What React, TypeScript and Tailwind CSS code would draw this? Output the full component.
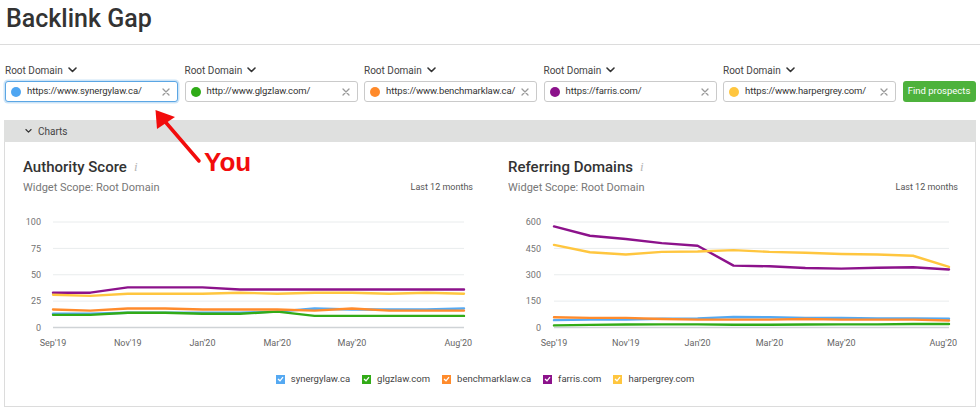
import React from 'react';

type Series = { color: string; values: number[] };

const C = {
  blue: '#55a9f2',
  green: '#32ab17',
  orange: '#ff8b2c',
  purple: '#8c128b',
  yellow: '#ffc63f',
};

const authority: Series[] = [
  { color: C.blue, values: [13, 13, 14, 14, 14, 14, 15, 18, 17, 17, 17, 18] },
  { color: C.green, values: [12, 12, 14, 14, 13, 13, 15, 11, 11, 11, 11, 11] },
  { color: C.orange, values: [17, 16, 18, 18, 17, 17, 17, 16, 18, 16, 16, 16] },
  { color: C.purple, values: [33, 33, 38, 38, 38, 36, 36, 36, 36, 36, 36, 36] },
  { color: C.yellow, values: [31, 30, 32, 32, 32, 33, 32, 33, 33, 32, 33, 32] },
];

const referring: Series[] = [
  { color: C.blue, values: [42, 45, 45, 50, 52, 60, 58, 55, 55, 52, 52, 50] },
  { color: C.green, values: [12, 15, 17, 18, 18, 16, 16, 17, 18, 18, 20, 20] },
  { color: C.orange, values: [58, 55, 55, 48, 45, 45, 45, 48, 45, 45, 45, 40] },
  { color: C.purple, values: [575, 522, 503, 480, 465, 352, 348, 338, 335, 340, 343, 330] },
  { color: C.yellow, values: [470, 428, 415, 430, 432, 440, 430, 425, 418, 415, 408, 345] },
];

const months: [number, string][] = [
  [0, "Sep'19"],
  [2, "Nov'19"],
  [4, "Jan'20"],
  [6, "Mar'20"],
  [8, "May'20"],
];

function Chart({
  max,
  ticks,
  series,
  plotLeft,
  labelRight,
}: {
  max: number;
  ticks: number[];
  series: Series[];
  plotLeft: number;
  labelRight: number;
}) {
  const plotRight = 442;
  const yTop = 21;
  const y0 = 126.5;
  const sx = (i: number) => plotLeft + (i * (plotRight - plotLeft)) / 11;
  const sy = (v: number) => y0 - (v / max) * (y0 - yTop);
  return (
    <svg width="451" height="152" viewBox="0 0 451 152" className="block">
      {ticks.map((t) => (
        <g key={t}>
          <line
            x1={plotLeft}
            x2={plotRight}
            y1={sy(t)}
            y2={sy(t)}
            stroke={t === 0 ? '#cfd3d6' : '#e9eced'}
            strokeWidth={t === 0 ? 1.4 : 1}
          />
          <text
            x={labelRight}
            y={sy(t) + 3.3}
            textAnchor="end"
            fontSize="9"
            fill="#737373"
            fontFamily="Roboto, sans-serif"
          >
            {t}
          </text>
        </g>
      ))}
      {series.map((s, k) => (
        <polyline
          key={k}
          points={s.values.map((v, i) => `${sx(i)},${sy(v)}`).join(' ')}
          fill="none"
          stroke={s.color}
          strokeWidth="2.4"
          strokeLinejoin="round"
          strokeLinecap="round"
        />
      ))}
      {months.map(([i, m]) => (
        <text
          key={m}
          x={sx(i)}
          y={144.5}
          textAnchor="middle"
          fontSize="9"
          fill="#666"
          fontFamily="Roboto, sans-serif"
        >
          {m}
        </text>
      ))}
      <text x={450} y={144.5} textAnchor="end" fontSize="9" fill="#666" fontFamily="Roboto, sans-serif">
        Aug'20
      </text>
    </svg>
  );
}

function Chevron({ className }: { className?: string }) {
  return (
    <svg width="9" height="6" viewBox="0 0 9 6" className={className}>
      <path d="M1 1 L4.5 4.5 L8 1" fill="none" stroke="#333" strokeWidth="1.6" strokeLinecap="round" strokeLinejoin="round" />
    </svg>
  );
}

function XIcon() {
  return (
    <svg width="8" height="8" viewBox="0 0 8 8" className="shrink-0">
      <path d="M1 1 L7 7 M7 1 L1 7" stroke="#9a9a9a" strokeWidth="1.3" strokeLinecap="round" />
    </svg>
  );
}

function DomainInput({ dot, url, focused }: { dot: string; url: string; focused?: boolean }) {
  return (
    <div className="flex w-[173px] flex-col">
      <div className="flex h-[16px] items-center gap-[5px] text-[10px] text-[#444]">
        <span>Root Domain</span>
        <Chevron />
      </div>
      <div
        className={
          focused
            ? 'mt-[3px] flex h-[21px] items-center rounded-[3px] border border-[#5ba6e4] bg-white pl-[5px] pr-[7px] shadow-[0_0_0_1.5px_rgba(91,166,228,0.3)]'
            : 'mt-[3px] flex h-[21px] items-center rounded-[3px] border border-[#cacaca] bg-white pl-[5px] pr-[7px]'
        }
      >
        <span className={`h-[10px] w-[10px] shrink-0 rounded-full ${dot}`} />
        <span className="ml-[6px] flex-1 whitespace-nowrap text-[9.5px] tracking-[-0.1px] text-[#333]">{url}</span>
        <XIcon />
      </div>
    </div>
  );
}

function Check({ bg }: { bg: string }) {
  return (
    <span className={`flex h-[9px] w-[9px] items-center justify-center ${bg}`}>
      <svg width="7" height="6" viewBox="0 0 7 6">
        <path d="M1 3 L3 4.8 L6 1.2" fill="none" stroke="#fff" strokeWidth="1.3" />
      </svg>
    </span>
  );
}

function Panel({
  title,
  children,
}: {
  title: string;
  children: React.ReactNode;
}) {
  return (
    <div className="flex w-[485px] flex-col px-[17px] pt-[15px]">
      <div className="flex h-[20px] items-center pl-[1px]">
        <span className="text-[15px] font-medium text-[#333]">{title}</span>
        <span className="ml-[7px] font-['Liberation_Serif',serif] text-[13px] italic text-[#b5b5b5]">i</span>
      </div>
      <div className="mt-[3px] flex h-[16px] items-center justify-between pl-[1px]">
        <span className="text-[11px] text-[#777]">Widget Scope: Root Domain</span>
        <span className="text-[9px] text-[#555]">Last 12 months</span>
      </div>
      <div className="mt-[5px]">{children}</div>
    </div>
  );
}

export default function App() {
  return (
    <div className="relative h-[420px] w-[980px] overflow-hidden bg-white font-['Roboto',sans-serif] text-[#333]">
      <div className="h-[45px] border-b border-[#dcdcdc] pl-[6px] pt-[3px]">
        <h1 className="text-[25px] font-medium leading-[32px] text-[#333]">Backlink Gap</h1>
      </div>

      <div className="mt-[17px] flex items-end gap-[6.5px] pl-[5px]">
        <DomainInput dot="bg-[#4ea6f2]" url="https://www.synergylaw.ca/" focused />
        <DomainInput dot="bg-[#2fab17]" url="http://www.glgzlaw.com/" />
        <DomainInput dot="bg-[#ff8a2a]" url="https://www.benchmarklaw.ca/" />
        <DomainInput dot="bg-[#8c128b]" url="https://farris.com/" />
        <DomainInput dot="bg-[#ffc63f]" url="https://www.harpergrey.com/" />
        <button className="flex h-[21px] w-[73px] items-center justify-center rounded-[3px] bg-[#4db23c] text-[9.5px] text-white">
          Find prospects
        </button>
      </div>

      <div className="ml-[4px] mr-[4px] mt-[18px]">
        <div className="flex h-[22px] items-center bg-[#dfe0df] pl-[20px] text-[10px] text-[#444]">
          <Chevron className="scale-[0.75]" />
          <span className="ml-[5px]">Charts</span>
        </div>
        <div className="flex flex-col border-x border-b border-[#dcdcdc] bg-white pb-[20px]">
          <div className="flex">
            <Panel title="Authority Score">
              <Chart max={100} ticks={[0, 25, 50, 75, 100]} series={authority} plotLeft={31} labelRight={19} />
            </Panel>
            <Panel title="Referring Domains">
              <Chart max={600} ticks={[0, 150, 300, 450, 600]} series={referring} plotLeft={47} labelRight={34} />
            </Panel>
          </div>
          <div className="mt-[19px] flex h-[14px] items-center justify-center pr-[10px] text-[9.5px] text-[#444]">
            <Check bg="bg-[#55a9f2]" />
            <span className="ml-[6px]">synergylaw.ca</span>
            <span className="ml-[12px]"><Check bg="bg-[#32ab17]" /></span>
            <span className="ml-[6px]">glgzlaw.com</span>
            <span className="ml-[12px]"><Check bg="bg-[#ff8b2c]" /></span>
            <span className="ml-[6px]">benchmarklaw.ca</span>
            <span className="ml-[12px]"><Check bg="bg-[#8c128b]" /></span>
            <span className="ml-[6px]">farris.com</span>
            <span className="ml-[12px]"><Check bg="bg-[#ffc63f]" /></span>
            <span className="ml-[6px]">harpergrey.com</span>
          </div>
        </div>
      </div>

      {/* annotation overlay */}
      <svg className="pointer-events-none absolute left-0 top-0" width="980" height="420">
        <line x1="199" y1="161" x2="162" y2="118" stroke="#f20c0c" strokeWidth="3.5" strokeLinecap="round" />
        <polygon points="155.5,110 157,129 175,117" fill="#f20c0c" />
      </svg>
      <span className="pointer-events-none absolute left-[204px] top-[147px] font-['Liberation_Sans',sans-serif] text-[26px] font-bold leading-[30px] text-[#f20c0c]">
        You
      </span>
    </div>
  );
}
